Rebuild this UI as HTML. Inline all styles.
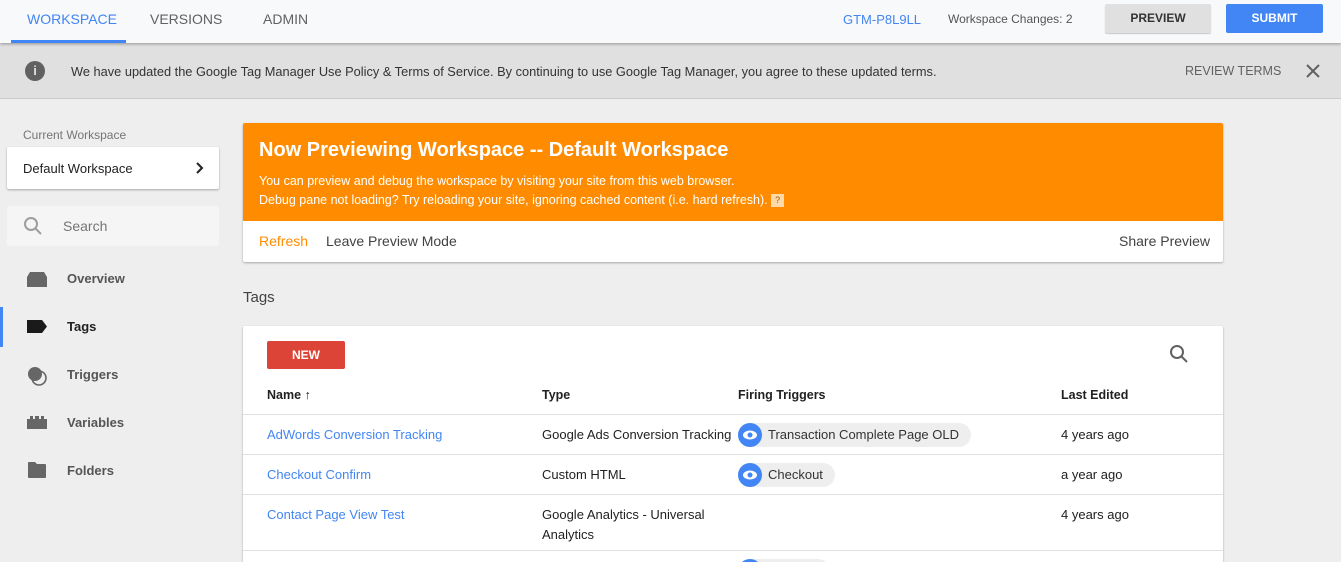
<!DOCTYPE html>
<html style="width:1341px;height:562px;overflow:hidden"><head><meta charset="utf-8"><style>
*{box-sizing:border-box;margin:0;padding:0}
body{width:1341px;height:562px;overflow:hidden;background:#eeeeee;font-family:"Liberation Sans",Arial,sans-serif;font-size:13px;color:#212121;position:relative}
.abs{position:absolute}
.top{left:0;top:0;width:1341px;height:43px;background:#f8f9fa;box-shadow:0 1px 3px rgba(0,0,0,.35);z-index:2}
.tab{top:11px;font-size:14px;color:#616161}
.notice{left:0;top:43px;width:1341px;height:56px;background:#e0e0e0;border-bottom:1px solid #ccc}
.nav{left:67px;font-size:13px;font-weight:bold;color:#555}
.card{background:#fff;box-shadow:0 1px 2px rgba(0,0,0,.3)}
.row{position:absolute;left:0;width:980px;border-top:1px solid #e0e0e0}
.link{color:#4285f4}
.chip{position:absolute;height:24px;border-radius:12px;background:#eee;padding:0 12px 0 30px;line-height:24px;font-size:13px;color:#333}
.chip .eye{position:absolute;left:0;top:0;width:24px;height:24px;border-radius:12px;background:#4285f4}
</style></head><body>
<div class="abs top">
 <div class="abs tab" style="left:27px;color:#4285f4">WORKSPACE</div>
 <div class="abs" style="left:11px;top:40px;width:115px;height:3px;background:#4285f4"></div>
 <div class="abs tab" style="left:150px">VERSIONS</div>
 <div class="abs tab" style="left:263px">ADMIN</div>
 <div class="abs" style="left:843px;top:12px;font-size:13px;color:#4285f4">GTM-P8L9LL</div>
 <div class="abs" style="left:948px;top:12px;font-size:12px;color:#555">Workspace Changes: 2</div>
 <div class="abs" style="left:1105px;top:4px;width:106px;height:29px;background:#e0e0e0;border-radius:2px;box-shadow:0 1px 1px rgba(0,0,0,.2);text-align:center;line-height:29px;font-size:12px;font-weight:bold;color:#333">PREVIEW</div>
 <div class="abs" style="left:1226px;top:4px;width:97px;height:29px;background:#4285f4;border-radius:2px;text-align:center;line-height:29px;font-size:12px;font-weight:bold;color:#fff">SUBMIT</div>
</div>
<div class="abs notice">
 <div class="abs" style="left:25px;top:18px;width:20px;height:20px;border-radius:10px;background:#616161;color:#e0e0e0;font-weight:bold;font-size:13px;text-align:center;line-height:20px">i</div>
 <div class="abs" style="left:71px;top:21px;font-size:12.8px;color:#333">We have updated the Google Tag Manager Use Policy &amp; Terms of Service. By continuing to use Google Tag Manager, you agree to these updated terms.</div>
 <div class="abs" style="left:1185px;top:21px;font-size:12.5px;color:#616161">REVIEW TERMS</div>
 <svg class="abs" style="left:1305px;top:20px" width="16" height="16"><path d="M2 2L14 14M14 2L2 14" stroke="#616161" stroke-width="2"/></svg>
</div>
<div class="abs" style="left:23px;top:128px;font-size:12px;color:#757575">Current Workspace</div>
<div class="abs card" style="left:7px;top:147px;width:212px;height:42px;border-radius:2px">
 <div class="abs" style="left:16px;top:14px;font-size:13px">Default Workspace</div>
 <svg class="abs" style="left:188px;top:15px" width="10" height="12"><path d="M2 1L7 6L2 11" stroke="#212121" stroke-width="2" fill="none"/></svg>
</div>
<div class="abs" style="left:7px;top:206px;width:212px;height:40px;background:#f5f5f5;border-radius:2px">
 <svg class="abs" style="left:16px;top:10px" width="20" height="20"><circle cx="8" cy="8" r="6" stroke="#9e9e9e" stroke-width="2" fill="none"/><path d="M12 12L18 18" stroke="#9e9e9e" stroke-width="2"/></svg>
 <div class="abs" style="left:56px;top:12px;font-size:14px;color:#757575">Search</div>
</div>
<svg class="abs" style="left:27px;top:272px" width="20" height="15"><path d="M3 0H17L20 5V15H0V5Z" fill="#666"/></svg>
<div class="abs nav" style="top:271px">Overview</div>
<div class="abs" style="left:0;top:307px;width:3px;height:40px;background:#4285f4"></div>
<svg class="abs" style="left:27px;top:320px" width="20" height="13"><path d="M0 0H15L20 6.5L15 13H0Z" fill="#1a1a1a"/></svg>
<div class="abs nav" style="top:319px;color:#212121">Tags</div>
<svg class="abs" style="left:26px;top:365px" width="22" height="22"><circle cx="9" cy="9" r="7" fill="#666"/><circle cx="13" cy="13" r="7" stroke="#666" stroke-width="1.6" fill="none"/></svg>
<div class="abs nav" style="top:367px">Triggers</div>
<svg class="abs" style="left:27px;top:416px" width="20" height="13"><path d="M0 3H3V0H6V3H8V0H12V3H14V0H17V3H20V13H0Z" fill="#666"/></svg>
<div class="abs nav" style="top:415px">Variables</div>
<svg class="abs" style="left:28px;top:462px" width="18" height="16"><path d="M0 1Q0 0 1 0H7L9 2H17Q18 2 18 3V15Q18 16 17 16H1Q0 16 0 15Z" fill="#666"/></svg>
<div class="abs nav" style="top:463px">Folders</div>

<div class="abs card" style="left:243px;top:123px;width:980px;height:139px;border-radius:2px;overflow:hidden">
 <div class="abs" style="left:0;top:0;width:980px;height:98px;background:#ff8c00"></div>
 <div class="abs" style="left:16px;top:16px;font-size:20px;font-weight:bold;color:#fff">Now Previewing Workspace -- Default Workspace</div>
 <div class="abs" style="left:16px;top:51px;font-size:12.5px;color:#fff">You can preview and debug the workspace by visiting your site from this web browser.</div>
 <div class="abs" style="left:16px;top:70px;font-size:12.5px;color:#fff">Debug pane not loading? Try reloading your site, ignoring cached content (i.e. hard refresh). <span style="display:inline-block;width:13px;height:13px;background:#ffd9a8;color:#a05a00;font-size:9px;text-align:center;line-height:13px;vertical-align:middle">?</span></div>
 <div class="abs" style="left:16px;top:110px;font-size:14px;color:#ff8c00">Refresh</div>
 <div class="abs" style="left:83px;top:110px;font-size:14px;color:#424242">Leave Preview Mode</div>
 <div class="abs" style="left:876px;top:110px;font-size:14px;color:#424242">Share Preview</div>
</div>
<div class="abs" style="left:243px;top:289px;font-size:15px;color:#424242">Tags</div>
<div class="abs card" style="left:243px;top:326px;width:980px;height:236px;border-radius:2px 2px 0 0;overflow:hidden">
 <div class="abs" style="left:24px;top:15px;width:78px;height:28px;background:#db4437;border-radius:2px;color:#fff;font-weight:bold;font-size:12px;text-align:center;line-height:28px">NEW</div>
 <svg class="abs" style="left:926px;top:18px" width="20" height="20"><circle cx="8" cy="8" r="6" stroke="#616161" stroke-width="2" fill="none"/><path d="M12 12L18 18" stroke="#616161" stroke-width="2"/></svg>
 <div class="abs" style="left:24px;top:62px;font-weight:bold;font-size:12.5px">Name <span style="font-weight:normal">↑</span></div>
 <div class="abs" style="left:299px;top:62px;font-weight:bold;font-size:12.5px">Type</div>
 <div class="abs" style="left:495px;top:62px;font-weight:bold;font-size:12.5px">Firing Triggers</div>
 <div class="abs" style="left:818px;top:62px;font-weight:bold;font-size:12.5px">Last Edited</div>
 <div class="row" style="top:88px;height:40px">
  <div class="abs link" style="left:24px;top:12px">AdWords Conversion Tracking</div>
  <div class="abs" style="left:299px;top:12px">Google Ads Conversion Tracking</div>
  <div class="chip" style="left:495px;top:8px"><span class="eye"><svg width="24" height="24"><ellipse cx="12" cy="12" rx="7" ry="4.5" fill="#fff"/><circle cx="12" cy="12" r="2.5" fill="#4285f4"/></svg></span>Transaction Complete Page OLD</div>
  <div class="abs" style="left:818px;top:12px">4 years ago</div>
 </div>
 <div class="row" style="top:128px;height:40px">
  <div class="abs link" style="left:24px;top:12px">Checkout Confirm</div>
  <div class="abs" style="left:299px;top:12px">Custom HTML</div>
  <div class="chip" style="left:495px;top:8px"><span class="eye"><svg width="24" height="24"><ellipse cx="12" cy="12" rx="7" ry="4.5" fill="#fff"/><circle cx="12" cy="12" r="2.5" fill="#4285f4"/></svg></span>Checkout</div>
  <div class="abs" style="left:818px;top:12px">a year ago</div>
 </div>
 <div class="row" style="top:168px;height:56px">
  <div class="abs link" style="left:24px;top:12px">Contact Page View Test</div>
  <div class="abs" style="left:299px;line-height:20px;top:10px">Google Analytics - Universal<br>Analytics</div>
  <div class="abs" style="left:818px;top:12px">4 years ago</div>
 </div>
 <div class="row" style="top:224px;height:40px">
  <div class="chip" style="left:495px;top:8px;width:92px"><span class="eye"></span></div>
 </div>
</div>
</body></html>
